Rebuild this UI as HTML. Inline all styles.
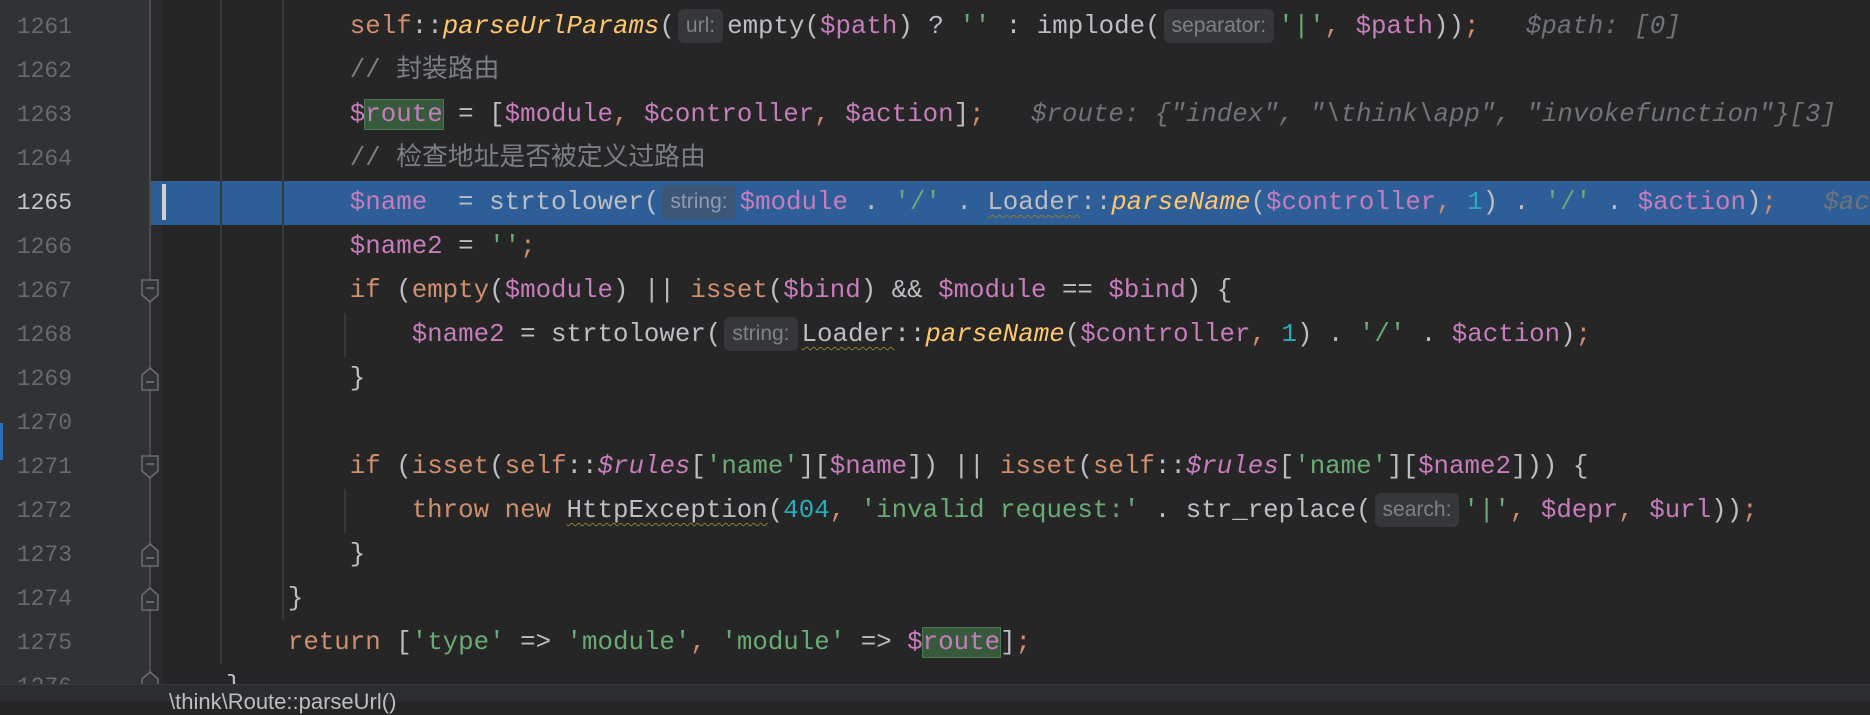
<!DOCTYPE html>
<html><head><meta charset="utf-8"><style>
*{margin:0;padding:0;box-sizing:border-box}
body{width:1870px;height:702px;overflow:hidden;background:#262627;position:relative;font-family:"Liberation Mono","Noto Sans CJK SC",monospace}
.gut{position:absolute;left:0;top:0;width:150px;height:702px;background:#313234}
.gut2{position:absolute;left:150px;top:0;width:12px;height:702px;background:#2a2a2c}
.hl{position:absolute;left:150px;top:181px;width:1720px;height:44px;background:#2e5e98}
.caret{position:absolute;left:162px;top:184px;width:4px;height:36px;background:#cfcfcf}
.foldline{position:absolute;left:149px;top:0;width:2px;height:702px;background:#4b4c4f}
.guide{position:absolute;width:2px;background:#38393b}
.num{position:absolute;left:0;width:72px;text-align:right;font-size:23px;color:#676a70;line-height:44px;font-family:"Liberation Mono",monospace}
.code{position:absolute;left:164px;font-size:25.8px;line-height:44px;white-space:pre;color:#bcbec4}
.k{color:#cf8e6d}.f{color:#ffc66d;font-style:italic}.v{color:#c77dbb}.s{color:#6aab73}.c{color:#7a7e85}.n{color:#2aacb8}
.vi{color:#c77dbb;font-style:italic}
.h{display:inline-block;font-family:"Liberation Sans",sans-serif;font-size:21px;color:#7e8187;background:#36373a;border-radius:6px;padding:0 8px;line-height:34px;margin:0 4px 0 3px;vertical-align:1px}
.hb{background:#3d5675;color:#8e9bb0}
.ih{color:#6f737a;font-style:italic}
.rt{background:#375a3d;outline:1px solid #4d7a52}
.wv{text-decoration:underline wavy #8a7a3a;text-underline-offset:5px;text-decoration-thickness:1px}
.fm{position:absolute;left:141px;width:18px;height:24px}
.bot{position:absolute;left:0;top:684px;width:1870px;height:18px;background:#2b2d30;border-top:1px solid #3a3b3e}
.bot span{position:absolute;left:169px;top:4px;font-size:22px;color:#bcbec4;font-family:"Liberation Sans",sans-serif}
</style></head><body>
<div class="gut"></div><div class="gut2"></div>
<div class="hl"></div>
<div class="foldline"></div>
<div class="guide" style="left:220px;top:0;height:664px"></div>
<div class="guide" style="left:282px;top:0;height:620px"></div>
<div class="guide" style="left:344px;top:313px;height:44px"></div>
<div class="guide" style="left:344px;top:489px;height:44px"></div>
<div class="caret"></div>
<div style="position:absolute;left:0;top:423px;width:3px;height:37px;background:#2f6db5"></div>

<div class="num" style="top:5px">1261</div>
<div class="num" style="top:49px">1262</div>
<div class="num" style="top:93px">1263</div>
<div class="num" style="top:137px">1264</div>
<div class="num" style="top:181px;color:#c4c6ca">1265</div>
<div class="num" style="top:225px">1266</div>
<div class="num" style="top:269px">1267</div>
<div class="num" style="top:313px">1268</div>
<div class="num" style="top:357px">1269</div>
<div class="num" style="top:401px">1270</div>
<div class="num" style="top:445px">1271</div>
<div class="num" style="top:489px">1272</div>
<div class="num" style="top:533px">1273</div>
<div class="num" style="top:577px">1274</div>
<div class="num" style="top:621px">1275</div>
<div class="num" style="top:665px">1276</div>

<svg class="fm" style="top:279px" viewBox="0 0 18 24"><path d="M1 1H17V16L9 23L1 16Z" fill="#313234" stroke="#6a6c70" stroke-width="1.6"/><path d="M5 9H13" stroke="#6a6c70" stroke-width="1.8"/></svg>
<svg class="fm" style="top:367px" viewBox="0 0 18 24"><path d="M1 23H17V8L9 1L1 8Z" fill="#313234" stroke="#6a6c70" stroke-width="1.6"/><path d="M5 15H13" stroke="#6a6c70" stroke-width="1.8"/></svg>
<svg class="fm" style="top:455px" viewBox="0 0 18 24"><path d="M1 1H17V16L9 23L1 16Z" fill="#313234" stroke="#6a6c70" stroke-width="1.6"/><path d="M5 9H13" stroke="#6a6c70" stroke-width="1.8"/></svg>
<svg class="fm" style="top:543px" viewBox="0 0 18 24"><path d="M1 23H17V8L9 1L1 8Z" fill="#313234" stroke="#6a6c70" stroke-width="1.6"/><path d="M5 15H13" stroke="#6a6c70" stroke-width="1.8"/></svg>
<svg class="fm" style="top:587px" viewBox="0 0 18 24"><path d="M1 23H17V8L9 1L1 8Z" fill="#313234" stroke="#6a6c70" stroke-width="1.6"/><path d="M5 15H13" stroke="#6a6c70" stroke-width="1.8"/></svg>
<svg class="fm" style="top:671px" viewBox="0 0 18 24"><path d="M1 23H17V8L9 1L1 8Z" fill="#313234" stroke="#6a6c70" stroke-width="1.6"/></svg>

<div class="code" style="top:5px">            <span class="k">self</span>::<span class="f">parseUrlParams</span>(<span class="h">url:</span>empty(<span class="v">$path</span>) ? <span class="s">''</span> : implode(<span class="h">separator:</span><span class="s">'|'</span><span class="k">,</span> <span class="v">$path</span>))<span class="k">;</span>   <span class="ih">$path: [0]</span></div>
<div class="code c" style="top:49px">            // 封装路由</div>
<div class="code" style="top:93px">            <span class="v">$<span class="rt">route</span></span> = [<span class="v">$module</span><span class="k">,</span> <span class="v">$controller</span><span class="k">,</span> <span class="v">$action</span>]<span class="k">;</span>   <span class="ih">$route: {"index", "\think\app", "invokefunction"}[3]</span></div>
<div class="code c" style="top:137px">            // 检查地址是否被定义过路由</div>
<div class="code" style="top:181px">            <span class="v">$name</span>  = strtolower(<span class="h hb">string:</span><span class="v">$module</span> . <span class="s">'/'</span> . <span class="wv">Loader</span>::<span class="f">parseName</span>(<span class="v">$controller</span><span class="k">,</span> <span class="n">1</span>) . <span class="s">'/'</span> . <span class="v">$action</span>)<span class="k">;</span>   <span class="ih">$action</span></div>
<div class="code" style="top:225px">            <span class="v">$name2</span> = <span class="s">''</span><span class="k">;</span></div>
<div class="code" style="top:269px">            <span class="k">if</span> (<span class="k">empty</span>(<span class="v">$module</span>) || <span class="k">isset</span>(<span class="v">$bind</span>) &amp;&amp; <span class="v">$module</span> == <span class="v">$bind</span>) {</div>
<div class="code" style="top:313px">                <span class="v">$name2</span> = strtolower(<span class="h">string:</span><span class="wv">Loader</span>::<span class="f">parseName</span>(<span class="v">$controller</span><span class="k">,</span> <span class="n">1</span>) . <span class="s">'/'</span> . <span class="v">$action</span>)<span class="k">;</span></div>
<div class="code" style="top:357px">            }</div>
<div class="code" style="top:445px">            <span class="k">if</span> (<span class="k">isset</span>(<span class="k">self</span>::<span class="vi">$rules</span>[<span class="s">'name'</span>][<span class="v">$name</span>]) || <span class="k">isset</span>(<span class="k">self</span>::<span class="vi">$rules</span>[<span class="s">'name'</span>][<span class="v">$name2</span>])) {</div>
<div class="code" style="top:489px">                <span class="k">throw new</span> <span class="wv">HttpException</span>(<span class="n">404</span><span class="k">,</span> <span class="s">'invalid request:'</span> . str_replace(<span class="h">search:</span><span class="s">'|'</span><span class="k">,</span> <span class="v">$depr</span><span class="k">,</span> <span class="v">$url</span>))<span class="k">;</span></div>
<div class="code" style="top:533px">            }</div>
<div class="code" style="top:577px">        }</div>
<div class="code" style="top:621px">        <span class="k">return</span> [<span class="s">'type'</span> =&gt; <span class="s">'module'</span><span class="k">,</span> <span class="s">'module'</span> =&gt; <span class="v">$<span class="rt">route</span></span>]<span class="k">;</span></div>
<div class="code" style="top:665px">    }</div>
<div class="bot"><span>\think\Route::parseUrl()</span></div>
</body></html>
